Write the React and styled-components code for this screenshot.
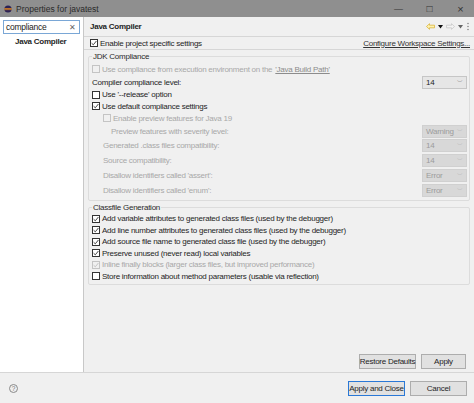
import React from 'react';
import styled, { createGlobalStyle } from 'styled-components';

const Global = createGlobalStyle`
  html, body { margin: 0; padding: 0; background: #fff; }
  body {
    font-family: "Liberation Sans", "Noto Sans", sans-serif;
    font-size: 8px;
    letter-spacing: -0.25px;
    color: #1e1e1e;
  }
  * { box-sizing: border-box; }
`;

const Window = styled.div`
  width: 474px;
  height: 403px;
  display: flex;
  flex-direction: column;
  overflow: hidden;
`;

const TitleBar = styled.div`
  height: 17px;
  background: #8f8f8f;
  display: flex;
  align-items: center;
  padding-left: 4px;
  color: #2a2a2a;
  font-size: 8.5px;
  letter-spacing: 0;
  gap: 4px;
`;

const TitleText = styled.span`
  flex: 1;
`;

const WinBtn = styled.span`
  width: 27px;
  text-align: center;
  color: #333;
  font-size: ${p => p.size || 9}px;
`;

const Body = styled.div`
  flex: 1;
  display: flex;
  min-height: 0;
`;

const Left = styled.div`
  width: 84px;
  background: #fff;
  border-right: 1px solid #c8c8c8;
  padding: 3px 3px;
`;

const Search = styled.div`
  height: 14px;
  border: 1px solid #7aa7d6;
  display: flex;
  align-items: center;
  padding: 0 3px 0 2px;
  justify-content: space-between;
  color: #222;
  font-size: 8.5px;
`;

const Clear = styled.span`
  color: #666;
  font-size: 8px;
`;

const TreeItem = styled.div`
  font-weight: bold;
  padding: 3px 0 0 12px;
`;

const Right = styled.div`
  flex: 1;
  background: #f0f0f0;
  display: flex;
  flex-direction: column;
`;

const Header = styled.div`
  height: 20px;
  border-bottom: 1px solid #d6d6d6;
  display: flex;
  align-items: center;
  padding: 0 4px 0 6px;
  font-weight: bold;
`;

const HeaderTitle = styled.span`
  flex: 1;
`;

const Tools = styled.div`
  display: flex;
  align-items: center;
  gap: 3px;
`;

const EnableRow = styled.div`
  height: 13px;
  border-bottom: 1px solid #d6d6d6;
  display: flex;
  align-items: center;
  padding: 0 4px 0 6px;
  justify-content: space-between;
`;

const Link = styled.span`
  text-decoration: underline;
  color: ${p => (p.disabled ? '#8c8c8c' : '#333')};
  margin-left: ${p => p.gap || 0}px;
`;

const Content = styled.div`
  flex: 1;
  display: flex;
  flex-direction: column;
  padding: 2px 4px 0 4px;
`;

const Group = styled.fieldset`
  margin: 0 0 ${p => p.mb || 0}px 0;
  padding: ${p => p.pt || 0}px 0 2px 3px;
  border: 1px solid #dcdcdc;
  border-radius: 2px;
`;

const Legend = styled.legend`
  padding: 0 1px;
  margin-left: 0;
  color: #2a2a2a;
`;

const Row = styled.div`
  height: ${p => p.h || 12}px;
  display: flex;
  align-items: center;
  padding-left: ${p => p.indent || 0}px;
  color: ${p => (p.disabled ? '#a8a8a8' : '#1e1e1e')};
  white-space: nowrap;
`;

const Label = styled.span`
  flex: 1;
`;

const Box = styled.span`
  width: 8px;
  height: 8px;
  border: 1px solid ${p => (p.disabled ? '#c4c4c4' : '#333')};
  background: ${p => (p.disabled ? '#f0f0f0' : '#fff')};
  margin-right: 2px;
  display: inline-flex;
  align-items: center;
  justify-content: center;
  flex: none;
`;

const Combo = styled.span`
  width: 45px;
  height: 13px;
  display: flex;
  align-items: center;
  justify-content: space-between;
  padding: 0 3px;
  border: 1px solid ${p => (p.disabled ? '#d0d0d0' : '#c6c6c6')};
  background: ${p => (p.disabled ? '#d8d8d8' : '#e6e6e6')};
  color: ${p => (p.disabled ? '#9c9c9c' : '#1e1e1e')};
  margin-right: 2px;
`;

const Arrow = styled.span`
  font-size: 6px;
  color: ${p => (p.disabled ? '#aaa' : '#555')};
`;

const Spacer = styled.div`
  flex: 1;
`;

const ButtonRow = styled.div`
  display: flex;
  justify-content: flex-end;
  gap: 5px;
  padding: ${p => (p.flat ? '0' : '0 4px 3px 0')};
`;

const Button = styled.span`
  height: 15px;
  width: ${p => p.w || 45}px;
  display: flex;
  align-items: center;
  justify-content: center;
  white-space: nowrap;
  background: #e1e1e1;
  border: 1px solid ${p => (p.primary ? '#2a78d6' : '#adadad')};
  color: #1e1e1e;
`;

const Footer = styled.div`
  height: 31px;
  border-top: 1px solid #d6d6d6;
  background: #f0f0f0;
  display: flex;
  align-items: center;
  padding: 0 7px 0 9px;
`;

const Help = styled.span`
  width: 9px;
  height: 9px;
  border: 1px solid #8a8a8a;
  border-radius: 50%;
  font-size: 6.5px;
  color: #777;
  display: flex;
  align-items: center;
  justify-content: center;
`;

const Check = ({ on, disabled }) => (
  <Box disabled={disabled}>
    {on && (
      <svg width="6" height="6" viewBox="0 0 6 6">
        <path d="M0.6 3.2 L2.3 4.8 L5.4 1" fill="none" stroke={disabled ? '#c0c0c0' : '#333'} strokeWidth="0.9" />
      </svg>
    )}
  </Box>
);

const Select = ({ value, disabled }) => (
  <Combo disabled={disabled}>
    <span>{value}</span>
    <Arrow disabled={disabled}>﹀</Arrow>
  </Combo>
);

const App = () => (
  <Window>
    <Global />
    <TitleBar>
      <svg width="8" height="8" viewBox="0 0 8 8">
        <circle cx="4" cy="4" r="3.6" fill="#2c2255" />
        <rect x="0.3" y="3.1" width="7.4" height="0.7" fill="#f7941e" />
        <rect x="0.3" y="4.4" width="7.4" height="0.7" fill="#f7941e" />
      </svg>
      <TitleText>Properties for javatest</TitleText>
      <WinBtn>—</WinBtn>
      <WinBtn size={10}>□</WinBtn>
      <WinBtn size={11}>×</WinBtn>
    </TitleBar>
    <Body>
      <Left>
        <Search>
          <span>compliance</span>
          <Clear>✕</Clear>
        </Search>
        <TreeItem>Java Compiler</TreeItem>
      </Left>
      <Right>
        <Header>
          <HeaderTitle>Java Compiler</HeaderTitle>
          <Tools>
            <svg width="9" height="7" viewBox="0 0 9 7">
              <path d="M0.5 3.5 L3.5 0.7 V2.2 H8.5 V4.8 H3.5 V6.3 Z" fill="#fff3b0" stroke="#d9b43a" strokeWidth="0.8" />
            </svg>
            <svg width="5" height="4" viewBox="0 0 5 4"><path d="M0 0 H5 L2.5 3.5 Z" fill="#111" /></svg>
            <svg width="9" height="7" viewBox="0 0 9 7">
              <path d="M8.5 3.5 L5.5 0.7 V2.2 H0.5 V4.8 H5.5 V6.3 Z" fill="#f4f4f4" stroke="#c8c8c8" strokeWidth="0.8" />
            </svg>
            <svg width="5" height="4" viewBox="0 0 5 4"><path d="M0 0 H5 L2.5 3.5 Z" fill="#666" /></svg>
            <svg width="4" height="9" viewBox="0 0 4 9">
              <circle cx="2" cy="1.5" r="0.8" fill="#888" />
              <circle cx="2" cy="4.5" r="0.8" fill="#888" />
              <circle cx="2" cy="7.5" r="0.8" fill="#888" />
            </svg>
          </Tools>
        </Header>
        <EnableRow>
          <Row>
            <Check on />
            Enable project specific settings
          </Row>
          <Link>Configure Workspace Settings...</Link>
        </EnableRow>
        <Content>
          <Group mb={2} pt={2}>
            <Legend>JDK Compliance</Legend>
            <Row h={12} disabled>
              <Check disabled />
              Use compliance from execution environment on the <Link disabled gap={3}>'Java Build Path'</Link>
            </Row>
            <Row h={14}>
              <Label>Compiler compliance level:</Label>
              <Select value="14" />
            </Row>
            <Row h={11}>
              <Check />
              Use '--release' option
            </Row>
            <Row h={12}>
              <Check on />
              Use default compliance settings
            </Row>
            <Row h={12} indent={11} disabled>
              <Check disabled />
              Enable preview features for Java 19
            </Row>
            <Row h={14} indent={19} disabled>
              <Label>Preview features with severity level:</Label>
              <Select value="Warning" disabled />
            </Row>
            <Row h={15} indent={11} disabled>
              <Label>Generated .class files compatibility:</Label>
              <Select value="14" disabled />
            </Row>
            <Row h={15} indent={11} disabled>
              <Label>Source compatibility:</Label>
              <Select value="14" disabled />
            </Row>
            <Row h={15} indent={11} disabled>
              <Label>Disallow identifiers called 'assert':</Label>
              <Select value="Error" disabled />
            </Row>
            <Row h={15} indent={11} disabled>
              <Label>Disallow identifiers called 'enum':</Label>
              <Select value="Error" disabled />
            </Row>
          </Group>
          <Group pt={1}>
            <Legend>Classfile Generation</Legend>
            <Row h={11.5}>
              <Check on />
              Add variable attributes to generated class files (used by the debugger)
            </Row>
            <Row h={11.5}>
              <Check on />
              Add line number attributes to generated class files (used by the debugger)
            </Row>
            <Row h={11.5}>
              <Check on />
              Add source file name to generated class file (used by the debugger)
            </Row>
            <Row h={11.5}>
              <Check on />
              Preserve unused (never read) local variables
            </Row>
            <Row h={11.5} disabled>
              <Check on disabled />
              Inline finally blocks (larger class files, but improved performance)
            </Row>
            <Row h={11.5}>
              <Check />
              Store information about method parameters (usable via reflection)
            </Row>
          </Group>
          <Spacer />
          <ButtonRow>
            <Button w={57}>Restore Defaults</Button>
            <Button w={45}>Apply</Button>
          </ButtonRow>
        </Content>
      </Right>
    </Body>
    <Footer>
      <Help>?</Help>
      <Spacer />
      <ButtonRow flat>
        <Button w={57} primary>Apply and Close</Button>
        <Button w={57}>Cancel</Button>
      </ButtonRow>
    </Footer>
  </Window>
);

export default App;
